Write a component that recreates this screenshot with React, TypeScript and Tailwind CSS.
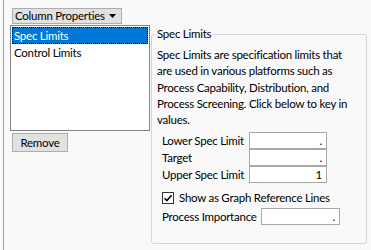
export default function App() {
  const limits = [
    { label: "Lower Spec Limit", value: "." },
    { label: "Target", value: "." },
    { label: "Upper Spec Limit", value: "1" },
  ];

  return (
    <div className="w-[371px] h-[250px] bg-[#f9f9f9] pl-[3px] font-['Lato',sans-serif] text-[11.5px] leading-[16px] tracking-[-0.25px] text-black">
      <div className="h-full border-l border-[#a0a0a0] flex items-start">
        {/* left column */}
        <div className="w-[146px] shrink-0 pl-[6px] pt-[8px] flex flex-col items-start">
          <button className="ml-[2px] h-[16px] flex items-center pl-[2px] pr-[5px] gap-[4px] bg-[#e1e1e1] border border-[#adadad] leading-none whitespace-nowrap">
            <span>Column Properties</span>
            <svg width="7" height="4" viewBox="0 0 7 4" className="shrink-0">
              <polygon points="0,0 7,0 3.5,4" fill="#000" />
            </svg>
          </button>
          <div className="mt-[1px] w-[140px] h-[106px] border border-[#828282] bg-white p-[1px]">
            <div className="h-[17px] bg-[#0078d7] border border-dotted border-black text-white pl-[1px] leading-[15px]">
              Spec Limits
            </div>
            <div className="h-[17px] pl-[2px] leading-[17px]">Control Limits</div>
          </div>
          <button className="mt-[2px] ml-[2px] w-[56px] h-[19px] bg-[#e1e1e1] border border-[#adadad] leading-none">
            Remove
          </button>
        </div>

        {/* spec limits group */}
        <fieldset className="ml-[1px] mt-[26px] w-[216px] h-[218px] border border-[#d5d5d5] rounded-[3px] pb-0">
          <legend className="ml-[3px] px-[2px] leading-[16px]">Spec Limits</legend>
          <p className="mt-[5px] pl-[5px] pr-[14px] leading-[16.3px]">
            Spec Limits are specification limits that are used in various platforms such as Process
            Capability, Distribution, and Process Screening. Click below to key in values.
          </p>
          <div className="mt-[4px] pl-[10px] flex flex-col whitespace-nowrap">
            {limits.map((l) => (
              <div key={l.label} className="flex items-center h-[17px]">
                <span className="w-[87px] shrink-0">{l.label}</span>
                <div className="w-[78px] h-[17px] bg-white border border-[#a8a8a8] text-right pr-[4px] leading-[15px]">
                  {l.value}
                </div>
              </div>
            ))}
            <label className="mt-[7px] flex items-center h-[16px] gap-[5px]">
              <span className="w-[12px] h-[12px] bg-white border border-[#333] flex items-center justify-center">
                <svg width="10" height="10" viewBox="0 0 10 10">
                  <path d="M1.5 5.2 L3.9 7.6 L8.6 2.2" fill="none" stroke="#000" strokeWidth="1.5" />
                </svg>
              </span>
              <span>Show as Graph Reference Lines</span>
            </label>
            <div className="mt-[2px] flex items-center h-[17px]">
              <span className="w-[99px] shrink-0">Process Importance</span>
              <div className="w-[79px] h-[17px] bg-white border border-[#a8a8a8] text-right pr-[4px] leading-[15px]">
                .
              </div>
            </div>
          </div>
        </fieldset>
      </div>
    </div>
  );
}
